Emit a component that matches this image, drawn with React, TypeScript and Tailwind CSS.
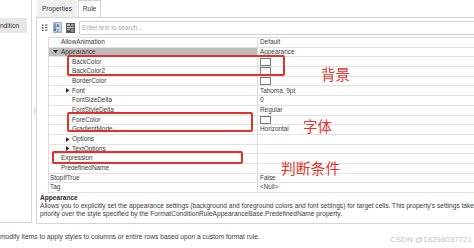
import React from "react";

type Row = {
  name: string;
  indent: number; // text x absolute
  arrow?: "down" | "right";
  arrowX?: number;
  value?: string;
  swatch?: boolean;
  gray?: boolean;
};

const rows: Row[] = [
  { name: "AllowAnimation", indent: 61, value: "Default" },
  { name: "Appearance", indent: 61, arrow: "down", arrowX: 53, value: "Appearance", gray: true },
  { name: "BackColor", indent: 72, swatch: true },
  { name: "BackColor2", indent: 72, swatch: true },
  { name: "BorderColor", indent: 72, swatch: true },
  { name: "Font", indent: 72, arrow: "right", arrowX: 66, value: "Tahoma, 9pt" },
  { name: "FontSizeDelta", indent: 72, value: "0" },
  { name: "FontStyleDelta", indent: 72, value: "Regular" },
  { name: "ForeColor", indent: 72, swatch: true },
  { name: "GradientMode", indent: 72, value: "Horizontal" },
  { name: "Options", indent: 72, arrow: "right", arrowX: 66 },
  { name: "TextOptions", indent: 72, arrow: "right", arrowX: 66 },
  { name: "Expression", indent: 61 },
  { name: "PredefinedName", indent: 61 },
  { name: "StopIfTrue", indent: 50, value: "False" },
  { name: "Tag", indent: 50, value: "<Null>" },
];

function Arrow({ dir }: { dir: "down" | "right" }) {
  return dir === "down" ? (
    <svg width="5" height="4" viewBox="0 0 5 4">
      <polygon points="0,0 5,0 2.5,3.5" fill="#333" />
    </svg>
  ) : (
    <svg width="4" height="5" viewBox="0 0 4 5">
      <polygon points="0,0 3.5,2.5 0,5" fill="#333" />
    </svg>
  );
}

function GridRow({ r }: { r: Row }) {
  const nameLeft = 48;
  return (
    <div className="flex h-[9.7px] border-b border-[#e2e2e2]">
      <div
        className={`relative w-[208px] shrink-0 flex items-center ${r.gray ? "bg-[#bdbdbd]" : ""}`}
      >
        {r.arrow && (
          <div className="absolute top-0 bottom-0 flex items-center" style={{ left: (r.arrowX ?? 0) - nameLeft - 1 }}>
            <Arrow dir={r.arrow} />
          </div>
        )}
        <span className="whitespace-nowrap leading-none" style={{ paddingLeft: r.indent - nameLeft - 1 }}>
          {r.name}
        </span>
      </div>
      <div className="flex-1 border-l border-[#dcdcdc] flex items-center pl-[2px] whitespace-nowrap leading-none">
        {r.swatch ? <div className="w-[11px] h-[8px] border border-[#7a7a7a] bg-white" /> : r.value}
      </div>
    </div>
  );
}

export default function App() {
  return (
    <div className="relative w-[474px] h-[248px] overflow-hidden bg-white text-[#3a3a3a] font-['Liberation_Sans',Arial,sans-serif] text-[6.4px]">
      <div className="flex h-[224px]">
        {/* left panel */}
        <div className="w-[32px] h-[223px] border-r border-b border-[#d6d6d6] pt-[18px] shrink-0">
          <div className="w-[27px] h-[15px] bg-[#e6e6e6] flex items-center text-[6.5px] whitespace-nowrap overflow-hidden">
            ndition
          </div>
        </div>
        {/* splitter */}
        <div className="w-[4px] shrink-0 flex flex-col items-center pt-[107px]">
          <div className="w-[1px] h-[8px] bg-[#d2d2d2]" />
        </div>
        {/* right panel */}
        <div className="flex-1 flex flex-col min-w-0">
          <div className="h-[17px] flex items-end pl-[1px]">
            <div className="w-[40px] h-[17px] bg-[#efefef] flex items-center justify-center text-[6.6px]">
              Properties
            </div>
            <div className="w-[23px] h-[17px] border border-b-0 border-[#d4d4d4] bg-white flex items-center justify-center text-[6.6px] ml-[1px]">
              Rule
            </div>
          </div>
          <div className="h-[207px] border-l border-t border-b border-[#d4d4d4] flex flex-col">
            {/* toolbar */}
            <div className="h-[19px] flex items-center pl-[5px]">
              <svg width="6" height="8" viewBox="0 0 6 8" className="shrink-0">
                <rect x="0" y="0.5" width="1.5" height="1.5" fill="#555" />
                <rect x="0" y="3" width="1.5" height="1.5" fill="#555" />
                <rect x="0" y="5.5" width="1.5" height="1.5" fill="#555" />
                <rect x="3" y="0.5" width="2.5" height="1.2" fill="#666" />
                <rect x="3" y="3" width="2.5" height="1.2" fill="#666" />
                <rect x="3" y="5.5" width="2.5" height="1.2" fill="#666" />
              </svg>
              <div className="ml-[5px] w-[9px] h-[11px] bg-[#c6d4e6] border border-[#9fb3cf] flex items-center justify-center shrink-0">
                <svg width="7" height="9" viewBox="0 0 7 9">
                  <line x1="1" y1="0.5" x2="1" y2="8" stroke="#2d4f86" strokeWidth="0.9" />
                  <polygon points="0,6.5 2,6.5 1,8.5" fill="#2d4f86" />
                  <text x="2.5" y="4" fontSize="4" fill="#2d4f86" fontFamily="Liberation Sans">A</text>
                  <text x="2.6" y="8.5" fontSize="4" fill="#2d4f86" fontFamily="Liberation Sans">Z</text>
                </svg>
              </div>
              <svg width="9" height="10" viewBox="0 0 9 10" className="ml-[4px] shrink-0">
                <rect x="0" y="0" width="9" height="10" fill="#5a5a5a" />
                <rect x="1" y="1" width="3" height="2" fill="#bdbdbd" />
                <rect x="5" y="1" width="3" height="2" fill="#9a9a9a" />
                <rect x="1" y="4" width="7" height="1" fill="#cfcfcf" />
                <rect x="1" y="6" width="3" height="1" fill="#cfcfcf" />
                <rect x="5" y="6" width="3" height="3" fill="#888" />
              </svg>
              <div className="ml-[4px] h-[14px] flex-1 border border-r-0 border-[#cfcfcf] flex items-center pl-[2px] text-[#a8a8a8] text-[6.4px] whitespace-nowrap">
                Enter text to search...
              </div>
            </div>
            {/* grid */}
            <div className="ml-[11px] border-l border-t border-[#dcdcdc]">
              {rows.map((r) => (
                <GridRow key={r.name} r={r} />
              ))}
            </div>
            {/* description */}
            <div className="pl-[3px] whitespace-nowrap text-[6.6px]">
              <div className="font-bold leading-[9px] text-[6.6px] text-[#2a2a2a]">Appearance</div>
              <div className="leading-[8px]">
                Allows you to explicitly set the appearance settings (background and foreground colors and font settings) for target cells. This property's settings take
              </div>
              <div className="leading-[8px]">
                priority over the style specified by the FormatConditionRuleAppearanceBase.PredefinedName property.
              </div>
            </div>
          </div>
        </div>
      </div>
      {/* footer */}
      <div className="pt-[9px] whitespace-nowrap leading-[8px] text-[6.7px]">
        modify items to apply styles to columns or entire rows based upon a custom format rule.
      </div>

      {/* annotations */}
      <div className="absolute left-[67px] top-[55px] w-[218px] h-[21px] border-2 border-[#e2312b] rounded-[2px]" />
      <div className="absolute left-[67px] top-[112px] w-[186px] h-[20px] border-2 border-[#e2312b] rounded-[2px]" />
      <div className="absolute left-[52px] top-[151px] w-[191px] h-[13px] border-2 border-[#e2312b] rounded-[2px]" />
      <div className="absolute left-[321px] top-[67px] text-[14.5px] leading-none text-[#e8342c] font-['Noto_Sans_CJK_SC',sans-serif]">背景</div>
      <div className="absolute left-[303px] top-[119px] text-[14.5px] leading-none text-[#e8342c] font-['Noto_Sans_CJK_SC',sans-serif]">字体</div>
      <div className="absolute left-[281px] top-[161px] text-[14.8px] leading-none text-[#e8342c] font-['Noto_Sans_CJK_SC',sans-serif]">判断条件</div>
      <div className="absolute left-[390px] top-[236px] text-[8px] leading-none text-[#c4c4c4] whitespace-nowrap">CSDN @18298037721</div>
    </div>
  );
}
